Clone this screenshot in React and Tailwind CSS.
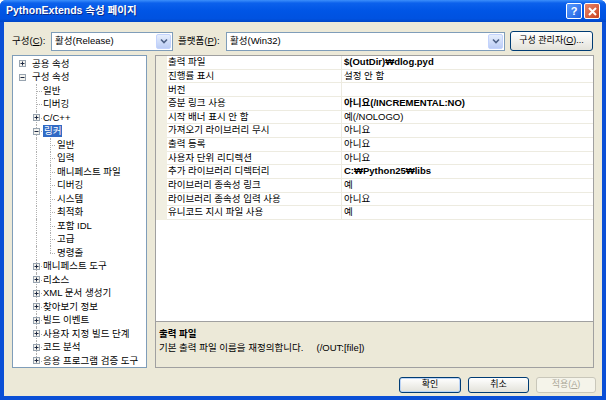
import React from 'react';

const treeRows = [
  { lvl: 0, box: '+', t: '공용 속성' },
  { lvl: 0, box: '-', t: '구성 속성' },
  { lvl: 1, t: '일반' },
  { lvl: 1, t: '디버깅' },
  { lvl: 1, box: '+', t: 'C/C++' },
  { lvl: 1, box: '-', t: '링커', sel: true },
  { lvl: 2, t: '일반' },
  { lvl: 2, t: '입력' },
  { lvl: 2, t: '매니페스트 파일' },
  { lvl: 2, t: '디버깅' },
  { lvl: 2, t: '시스템' },
  { lvl: 2, t: '최적화' },
  { lvl: 2, t: '포함 IDL' },
  { lvl: 2, t: '고급' },
  { lvl: 2, t: '명령줄', last: true },
  { lvl: 1, box: '+', t: '매니페스트 도구' },
  { lvl: 1, box: '+', t: '리소스' },
  { lvl: 1, box: '+', t: 'XML 문서 생성기' },
  { lvl: 1, box: '+', t: '찾아보기 정보' },
  { lvl: 1, box: '+', t: '빌드 이벤트' },
  { lvl: 1, box: '+', t: '사용자 지정 빌드 단계' },
  { lvl: 1, box: '+', t: '코드 분석' },
  { lvl: 1, box: '+', t: '응용 프로그램 검증 도구', last: true },
];

const props = [
  ['출력 파일', '$(OutDir)₩dlog.pyd', true],
  ['진행률 표시', '설정 안 함'],
  ['버전', ''],
  ['증분 링크 사용', '아니요(/INCREMENTAL:NO)', true],
  ['시작 배너 표시 안 함', '예(/NOLOGO)'],
  ['가져오기 라이브러리 무시', '아니요'],
  ['출력 등록', '아니요'],
  ['사용자 단위 리디렉션', '아니요'],
  ['추가 라이브러리 디렉터리', 'C:₩Python25₩libs', true],
  ['라이브러리 종속성 링크', '예'],
  ['라이브러리 종속성 입력 사용', '아니요'],
  ['유니코드 지시 파일 사용', '예'],
];

const ExpandBox = ({ sign }) => (
  <svg width="7" height="7" viewBox="0 0 7 7" className="block">
    <rect x="0.5" y="0.5" width="6" height="6" fill="#F4F3EE" stroke="#98A4B0" />
    <path d="M1.5 3.5 H5.5" stroke="#1F2A44" strokeWidth="1" />
    {sign === '+' && <path d="M3.5 1.5 V5.5" stroke="#1F2A44" strokeWidth="1" />}
  </svg>
);

const TreeRow = ({ row }) => {
  const { lvl, box, t, sel, last } = row;
  return (
    <div className="relative flex h-[13.5px] items-center">
      {/* guide lines */}
      {lvl >= 1 && (
        <span className={`absolute left-[23px] top-0 border-l border-dotted border-[#B0B0B0] ${lvl === 1 && last ? 'h-[7px]' : 'h-full'}`} />
      )}
      {lvl === 1 && <span className="absolute left-[23px] top-[6.5px] w-[6px] border-t border-dotted border-[#B0B0B0]" />}
      {lvl === 2 && (
        <>
          <span className={`absolute left-[37px] top-0 border-l border-dotted border-[#B0B0B0] ${last ? 'h-[7px]' : 'h-full'}`} />
          <span className="absolute left-[37px] top-[6.5px] w-[5px] border-t border-dotted border-[#B0B0B0]" />
        </>
      )}
      {box && (
        <span className={`absolute top-[3px] ${lvl === 0 ? 'left-[6px]' : 'left-[20px]'}`}>
          <ExpandBox sign={box} />
        </span>
      )}
      <span
        className={`whitespace-nowrap leading-[12px] ${lvl === 0 ? 'ml-[19px]' : lvl === 1 ? 'ml-[30px]' : 'ml-[44px]'} ${sel ? 'bg-[#316AC5] px-[1px] text-white' : ''}`}
      >
        {t}
      </span>
    </div>
  );
};

const Combo = ({ value, width }) => (
  <div className={`flex h-[19px] items-center border border-[#7F9DB9] bg-white ${width}`}>
    <span className="flex-1 pl-[3px] text-[9.5px]">{value}</span>
    <span className="m-[1px] flex h-[15px] w-[15px] items-center justify-center rounded-[2px] border border-[#C3D3FD] bg-gradient-to-b from-[#E6EEFC] to-[#BCCDF5]">
      <svg width="8" height="6" viewBox="0 0 8 6">
        <path d="M1 1.5 L4 4.5 L7 1.5" stroke="#4D6185" strokeWidth="1.6" fill="none" />
      </svg>
    </span>
  </div>
);

const XpButton = ({ children, disabled, width, isDefault }) => (
  <div
    className={`flex h-[16px] items-center justify-center rounded-[3px] border text-[9px] ${width} ${
      disabled
        ? 'border-[#C9C7BA] bg-[#F5F4EA] text-[#ACA899]'
        : isDefault
        ? 'border-[#003C74] bg-gradient-to-b from-white to-[#E3E2DA] shadow-[inset_0_0_0_1px_#BCD4F6] text-black'
        : 'border-[#003C74] bg-gradient-to-b from-white to-[#E3E2DA] text-black'
    }`}
  >
    {children}
  </div>
);

export default function App() {
  return (
    <div className="flex h-[400px] w-[606px] flex-col overflow-hidden rounded-t-[6px] bg-[#0A4FD6] text-black [font-family:'Liberation_Sans','Noto_Sans_CJK_KR',sans-serif]">
      {/* Title bar */}
      <div className="flex h-[22px] shrink-0 items-center bg-[linear-gradient(180deg,#3C8FFB_0%,#0C61EC_14%,#0055E5_50%,#0052E0_85%,#0046C6_100%)] pl-[6px] pr-[6px]">
        <span className="flex-1 text-[10.5px] font-bold text-white [text-shadow:1px_1px_0_#0A2A8A]">
          PythonExtends 속성 페이지
        </span>
        <div className="flex gap-[2px]">
          <div className="flex h-[16px] w-[16px] items-center justify-center rounded-[2px] border border-white bg-gradient-to-br from-[#5A9BFF] to-[#1E5FE0] text-[11px] font-bold leading-none text-white">
            ?
          </div>
          <div className="flex h-[16px] w-[16px] items-center justify-center rounded-[2px] border border-white bg-gradient-to-br from-[#E9866A] to-[#C8401A]">
            <svg width="9" height="9" viewBox="0 0 9 9">
              <path d="M1 1 L8 8 M8 1 L1 8" stroke="white" strokeWidth="2" />
            </svg>
          </div>
        </div>
      </div>

      {/* Client area */}
      <div className="mx-[4px] mb-[4px] flex flex-1 flex-col bg-[#ECE9D8] text-[9.5px]">
        {/* Configuration row */}
        <div className="mt-[9px] flex h-[20px] items-center pl-[8px]">
          <span className="w-[39px] whitespace-nowrap">구성(<u>C</u>):</span>
          <Combo value="활성(Release)" width="w-[122px]" />
          <span className="ml-[5px] w-[48px] whitespace-nowrap">플랫폼(<u>P</u>):</span>
          <Combo value="활성(Win32)" width="w-[279px]" />
          <div className="ml-[5px] flex h-[20px] w-[83px] items-center justify-center rounded-[3px] border border-[#003C74] bg-gradient-to-b from-white to-[#E3E2DA] text-[9px]">
            구성 관리자(<u>O</u>)...
          </div>
        </div>

        {/* Main */}
        <div className="mt-[4px] flex pl-[8px]">
          {/* Tree */}
          <div className="h-[313px] w-[135px] border border-[#7F9DB9] bg-white pt-[1px] text-[9.5px]">
            {treeRows.map((r, i) => (
              <TreeRow key={i} row={r} />
            ))}
          </div>

          {/* Right panel */}
          <div className="ml-[8px] flex h-[313px] w-[439px] flex-col">
            <div className="h-[267px] border border-[#A0A0A0] bg-white">
              {props.map(([name, val, bold], i) => (
                <div key={i} className="flex h-[13.67px] items-stretch">
                  <div className="w-[11px] bg-[#F1EFE2]" />
                  <div className="flex w-[175px] items-center border-b border-r border-[#EDEBE0] pl-[1px] whitespace-nowrap">
                    {name}
                  </div>
                  <div className={`flex flex-1 items-center border-b border-[#EDEBE0] pl-[2px] whitespace-nowrap ${bold ? 'font-bold' : ''}`}>
                    {val}
                  </div>
                </div>
              ))}
            </div>
            <div className="flex-1 border border-t-0 border-[#A0A0A0] pl-[3px] pt-[5px] leading-[14px]">
              <div className="font-bold">출력 파일</div>
              <div className="whitespace-pre">기본 출력 파일 이름을 재정의합니다.     (/OUT:[file])</div>
            </div>
          </div>
        </div>

        {/* Buttons */}
        <div className="mt-[9px] flex justify-end gap-[7px] pr-[6px]">
          <XpButton width="w-[62px]" isDefault>확인</XpButton>
          <XpButton width="w-[61px]">취소</XpButton>
          <XpButton width="w-[60px]" disabled>
            적용(<u>A</u>)
          </XpButton>
        </div>
      </div>
    </div>
  );
}
